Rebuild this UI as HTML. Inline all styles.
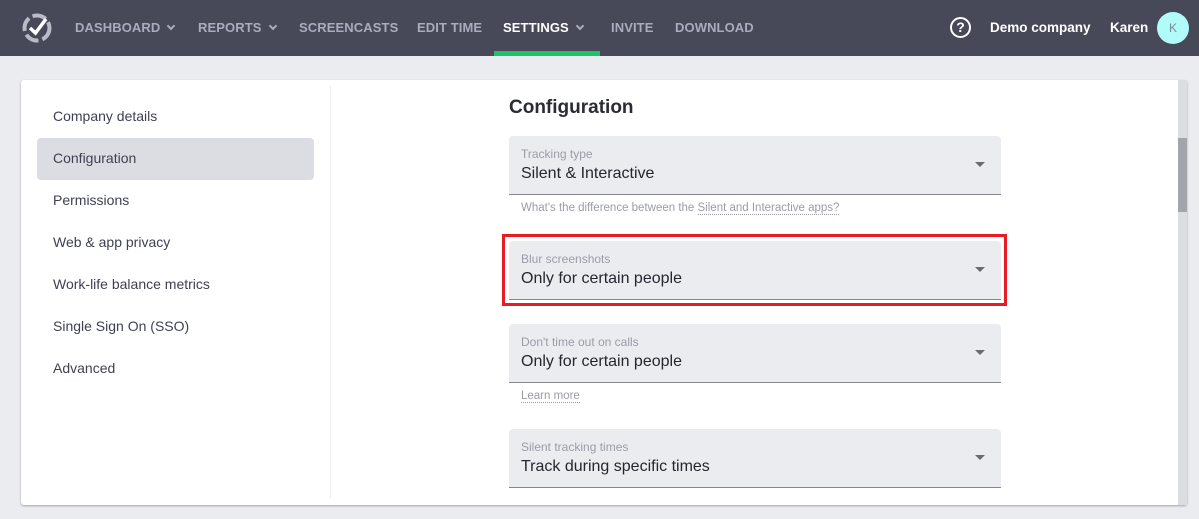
<!DOCTYPE html>
<html><head><meta charset="utf-8"><style>
*{box-sizing:border-box;margin:0;padding:0}
body{width:1199px;height:519px;overflow:hidden;background:#ebecf0;font-family:"Liberation Sans",Arial,sans-serif;position:relative}
.nav{position:absolute;left:0;top:0;width:1199px;height:56px;background:#474958}
.nav .it{position:absolute;top:20px;font-size:13px;font-weight:bold;color:#a9acbf;letter-spacing:0.1px}
.chev{display:inline-block;width:6px;height:6px;border-right:2px solid currentColor;border-bottom:2px solid currentColor;transform:rotate(45deg);margin-left:8px;position:relative;top:-3px}
.card{position:absolute;left:21px;top:80px;width:1166px;height:425px;background:#fff;border-radius:3px;box-shadow:0 1px 2px rgba(0,0,0,.3)}
.side{position:absolute;left:32px;font-size:14px;color:#3f4152}
.sel{position:absolute;left:37px;top:138px;width:277px;height:42px;background:#dcdde2;border-radius:4px}
.field{position:absolute;left:509px;width:492px;height:59px;background:#ebecf0;border-radius:4px 4px 0 0;border-bottom:1px solid #86878f}
.field .l{position:absolute;left:12px;top:11px;font-size:12px;color:#9b9ca8}
.field .v{position:absolute;left:12px;top:29px;font-size:16px;color:#25262f}
.field .a{position:absolute;right:16px;top:26px;width:0;height:0;border-left:5px solid transparent;border-right:5px solid transparent;border-top:5px solid #6a6b72}
.help{position:absolute;left:521px;font-size:11.5px;color:#9b9ca8}
.help u{text-decoration:none;border-bottom:1px dotted #9b9ca8}
</style></head><body>
<div class="nav">
<svg style="position:absolute;left:21px;top:12px" width="32" height="32" viewBox="0 0 32 32">
<circle cx="16" cy="16" r="12.5" fill="none" stroke="#b9bbc6" stroke-width="4" stroke-dasharray="14 4"/>
<path d="M9 16 L14.5 21 L25 7" fill="none" stroke="#fff" stroke-width="3.5"/>
</svg>
<div class="it" style="left:75px">DASHBOARD<span class="chev"></span></div>
<div class="it" style="left:198px">REPORTS<span class="chev"></span></div>
<div class="it" style="left:299px">SCREENCASTS</div>
<div class="it" style="left:417px">EDIT TIME</div>
<div class="it" style="left:503px;color:#fff">SETTINGS<span class="chev" style="color:#a9acbf"></span></div>
<div style="position:absolute;left:494px;top:51px;width:106px;height:5px;background:#1fc16b"></div>
<div class="it" style="left:611px">INVITE</div>
<div class="it" style="left:675px">DOWNLOAD</div>
<div style="position:absolute;left:950px;top:17px;width:21px;height:21px;border:2px solid #fff;border-radius:50%;color:#fff;font-size:14px;font-weight:bold;text-align:center;line-height:17px">?</div>
<div style="position:absolute;left:990px;top:20px;font-size:13.5px;color:#fff;font-weight:bold">Demo company</div>
<div style="position:absolute;left:1110px;top:20px;font-size:13.5px;color:#fff;font-weight:bold">Karen</div>
<div style="position:absolute;left:1157px;top:12px;width:32px;height:32px;border-radius:50%;background:#b2fbfb;color:#7a8a94;font-size:12px;text-align:center;line-height:32px">K</div>
</div>
<div class="card">
<div style="position:absolute;left:309px;top:6px;width:1px;height:412px;background:#eeeff2"></div>
<div style="position:absolute;right:0;top:0;width:9px;height:425px;background:#dcdde0"></div>
<div style="position:absolute;right:0;top:58px;width:9px;height:74px;background:#a3a5ad"></div>
</div>
<div class="sel"></div>
<div class="side" style="left:53px;top:108px">Company details</div>
<div class="side" style="left:53px;top:150px">Configuration</div>
<div class="side" style="left:53px;top:192px">Permissions</div>
<div class="side" style="left:53px;top:234px">Web &amp; app privacy</div>
<div class="side" style="left:53px;top:276px">Work-life balance metrics</div>
<div class="side" style="left:53px;top:318px">Single Sign On (SSO)</div>
<div class="side" style="left:53px;top:360px">Advanced</div>
<div style="position:absolute;left:509px;top:97px;font-size:19px;font-weight:bold;color:#2a2b33">Configuration</div>
<div class="field" style="top:136px"><div class="l">Tracking type</div><div class="v">Silent &amp; Interactive</div><div class="a"></div></div>
<div class="help" style="top:202px">What's the difference between the <u>Silent and Interactive apps?</u></div>
<div style="position:absolute;left:502px;top:234px;width:505px;height:72px;border:3px solid #e81c24"></div>
<div class="field" style="top:241px"><div class="l">Blur screenshots</div><div class="v">Only for certain people</div><div class="a"></div></div>
<div class="field" style="top:324px"><div class="l">Don't time out on calls</div><div class="v">Only for certain people</div><div class="a"></div></div>
<div class="help" style="top:390px"><u>Learn more</u></div>
<div class="field" style="top:429px"><div class="l">Silent tracking times</div><div class="v">Track during specific times</div><div class="a"></div></div>
</body></html>
